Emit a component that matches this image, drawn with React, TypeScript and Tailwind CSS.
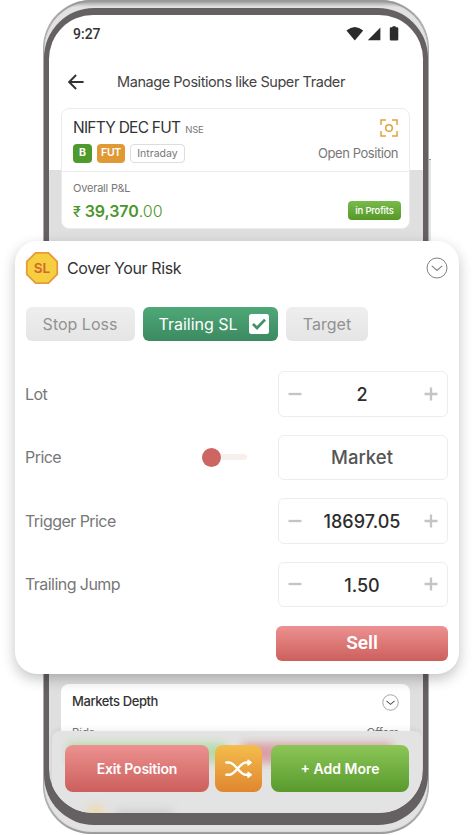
import React from "react";
import { clsx } from "clsx";

type StepperRow = {
  label: string;
  value: string;
  stepper: boolean;
};

const rows: StepperRow[] = [
  { label: "Lot", value: "2", stepper: true },
  { label: "Price", value: "Market", stepper: false },
  { label: "Trigger Price", value: "18697.05", stepper: true },
  { label: "Trailing Jump", value: "1.50", stepper: true },
];

function StatusIcons() {
  return (
    <svg width="54" height="16" viewBox="0 0 54 16" fill="#2b2b2b">
      <path d="M0.4 4.6 Q8.8 -2.6 17.2 4.6 L8.8 14.6 Z" />
      <path d="M21.8 14.2 L34.4 1.6 V14.2 Z" />
      <path d="M45 1.2 h1.5 v-1 h3.2 v1 h1.4 q1.2 0 1.2 1.2 v10.8 q0 1.2 -1.2 1.2 h-6.1 q-1.2 0 -1.2 -1.2 v-10.8 q0 -1.2 1.2 -1.2 Z" />
    </svg>
  );
}

function BackArrow() {
  return (
    <svg width="16" height="16" viewBox="0 0 16 16" fill="none" stroke="#333" strokeWidth="1.9">
      <path d="M15.6 8 H1.4 M8.1 1 L1.2 8 L8.1 15" />
    </svg>
  );
}

function FocusIcon() {
  return (
    <svg width="18" height="18" viewBox="0 0 18 18" fill="none" stroke="#e0a33c" strokeWidth="1.5">
      <path d="M1 6 V1 H6 M12 1 H17 V6 M17 12 V17 H12 M6 17 H1 V12" />
      <circle cx="9" cy="9" r="3.3" />
    </svg>
  );
}

function ChevronCircle({ size, dark }: { size: number; dark?: boolean }) {
  return (
    <svg width={size} height={size} viewBox="0 0 22 22" fill="none" strokeWidth="1">
      <circle cx="11" cy="11" r="10" stroke={dark ? "#888" : "#808080"} />
      <path d="M5.8 8.8 L11 13.4 L16.2 8.8" stroke={dark ? "#555" : "#808080"} strokeWidth={dark ? 1.3 : 1.1} />
    </svg>
  );
}

function SwapIcon() {
  return (
    <svg width="30" height="20" viewBox="0 0 30 20" fill="none" stroke="#fff" strokeWidth="2.5" strokeLinecap="round">
      <path d="M2.4 3.6 H5 C12 3.6 15 15.8 22 15.8 H24" />
      <path d="M2.4 15.8 H5 C12 15.8 15 3.6 22 3.6 H24" />
      <path d="M24 1 L27.4 3.6 L24 6.2 Z M24 13.2 L27.4 15.8 L24 18.4 Z" fill="#fff" strokeWidth="1.2" strokeLinejoin="round" />
    </svg>
  );
}

function PositionCard() {
  return (
    <div className="mr-[13px] ml-3 h-[121px] rounded-lg border border-[#ebebeb] bg-white">
      <div className="flex h-[63px] justify-between border-b border-[#ececec] pr-[11px] pl-[11px]">
        <div>
          <div className="mt-[9px] flex h-5 items-baseline gap-[5px]">
            <span className="text-[15.5px] leading-5 tracking-[-0.75px] text-[#333]">NIFTY DEC FUT</span>
            <span className="text-[9.5px] tracking-[-0.3px] text-[#777]">NSE</span>
          </div>
          <div className="mt-[6px] flex gap-[5px] text-[11px] leading-[18px]">
            <span className="w-[19px] rounded bg-[#4f9a2d] text-center text-[10.5px] font-bold text-white">B</span>
            <span className="w-7 rounded bg-[#e09a35] text-center text-[10.5px] font-semibold tracking-[-0.3px] text-white">
              FUT
            </span>
            <span className="w-[55px] rounded border border-[#ddd] text-center text-[10.5px] leading-[17px] text-[#777]">
              Intraday
            </span>
          </div>
        </div>
        <div className="flex flex-col items-end">
          <div className="mt-[10px]">
            <FocusIcon />
          </div>
          <span className="mt-[6px] text-[13px] leading-5 tracking-[-0.45px] text-[#777]">Open Position</span>
        </div>
      </div>
      <div className="flex justify-between pr-2 pl-[11px]">
        <div>
          <div className="mt-2 text-[11px] leading-4 tracking-[-0.2px] text-[#777]">Overall P&amp;L</div>
          <div className="mt-[5px] text-[16px] leading-5 tracking-[-0.05px] text-[#4c962b]">
            <span className="mr-1 text-[14px] font-medium">₹</span>
            <span className="font-semibold">39,370</span>
            <span className="font-light">.00</span>
          </div>
        </div>
        <span className="mt-[29px] h-[19px] w-[53px] rounded bg-linear-to-b from-[#79bb4a] to-[#559828] text-center text-[9.5px] leading-[19px] font-medium tracking-[-0.2px] text-white">
          in Profits
        </span>
      </div>
    </div>
  );
}

function BottomBar() {
  return (
    <div className="absolute bottom-0 left-[3px] h-[82px] w-[370px] rounded-t-lg bg-[#e3e3e3] shadow-[0_-2px_5px_rgba(0,0,0,0.06)]">
      <div className="absolute top-[12px] left-4 h-5 w-[158px] bg-[#b4dca9] blur-[4px]"></div>
      <div className="absolute top-[12px] left-[190px] h-5 w-[150px] bg-[#d9a0a6] blur-[4px]"></div>
      <div className="absolute bottom-[-5px] left-9 h-3 w-4 bg-[#ecd9ae] blur-[4px]"></div>
      <div className="absolute bottom-[-8px] left-[64px] h-3 w-14 bg-[#d0d0d0] blur-[4px]"></div>
      <div className="relative mt-[14px] ml-[13px] flex h-[47px] text-[14px] font-semibold text-white">
        <button className="w-36 rounded-lg bg-linear-to-b from-[#ec9191] to-[#cc5f5c] tracking-[-0.2px]">
          Exit Position
        </button>
        <button className="ml-[6px] flex w-[47px] items-center justify-center rounded-lg bg-linear-to-b from-[#f4bd4c] to-[#df8630]">
          <SwapIcon />
        </button>
        <button className="ml-[9px] w-[138px] rounded-lg bg-linear-to-b from-[#8cc657] to-[#599a2c]">
          + Add More
        </button>
      </div>
    </div>
  );
}

function Phone() {
  return (
    <div className="relative ml-[43px] h-[835px] w-[386px]">
      {/* side button */}
      <div className="absolute top-[159px] left-[385px] h-[90px] w-[3px] border-t border-[#999] bg-[#e4e4e4]"></div>
      <div className="relative h-[834px] rounded-[48px] border-x border-[#aaa] bg-linear-to-b from-[#909090] via-[#e2e2e2] via-[7px] to-[#e2e2e2] to-[830px] pt-2 pb-[9px] shadow-[inset_0_-2px_1px_#999,inset_0_2px_1px_#999]">
        <div className="h-full rounded-[50px] bg-[#656162] px-[5px] pt-[7px] pb-3">
          <div className="relative h-full overflow-hidden rounded-[44px] bg-linear-to-b from-white from-[155px] to-[#dfdfdf] to-[155px]">
            <div className="flex h-[38px] items-center justify-between pr-[23px] pl-6">
              <span className="font-['Roboto'] text-[14px] font-medium text-[#333]">9:27</span>
              <StatusIcons />
            </div>
            <div className="flex h-[55px] items-center pt-[3px] pl-[19px]">
              <BackArrow />
              <h1 className="ml-[33px] text-[14.5px] tracking-[-0.43px] text-[#444]">
                Manage Positions like Super Trader
              </h1>
            </div>
            <PositionCard />
            <div className="mt-[455px] mr-[13px] ml-3 h-[90px] rounded-lg bg-white pt-2 pr-[11px] pl-[11px]">
              <div className="flex h-5 items-center justify-between">
                <h2 className="text-[13px] font-medium tracking-[-0.4px] text-[#333]">Markets Depth</h2>
                <ChevronCircle size={17} dark />
              </div>
              <div className="mt-[13px] flex justify-between text-[11.5px] leading-4 tracking-[-0.2px] text-[#777]">
                <span>Bids</span>
                <span>Offers</span>
              </div>
            </div>
            <BottomBar />
          </div>
        </div>
      </div>
    </div>
  );
}

function RiskCard() {
  return (
    <div className="absolute top-[241px] left-[15px] h-[433px] w-[444px] rounded-[22px] bg-white pr-[11px] pl-[10px] shadow-[0_5px_14px_rgba(0,0,0,0.24)]">
      <div className="flex h-[54px] items-center">
        <svg width="34" height="34" viewBox="0 0 34 34">
          <path
            d="M10.6 1.8 H23.4 L32.2 10.6 V23.4 L23.4 32.2 H10.6 L1.8 23.4 V10.6 Z"
            fill="#f5cf3f"
            stroke="#e59a3c"
            strokeWidth="1.8"
          />
          <text x="17" y="21.5" textAnchor="middle" fontSize="13.5" fontWeight="600" fill="#d0692f" fontFamily="Inter">
            SL
          </text>
        </svg>
        <h2 className="ml-2 text-[16px] tracking-[-0.4px] text-[#333]">Cover Your Risk</h2>
        <div className="ml-auto">
          <ChevronCircle size={22} />
        </div>
      </div>
      <div className="mt-3 ml-[0.5px] flex h-[34px] gap-[8.5px] text-[16px]">
        <button className="w-[109px] rounded-md bg-linear-to-b from-[#eee] to-[#e5e5e5] text-[#929292]">Stop Loss</button>
        <button className="flex w-[134.5px] items-center rounded-md bg-linear-to-b from-[#4fa878] to-[#3c8a60] pl-[15.5px] text-white">
          Trailing SL
          <svg className="ml-[11px]" width="20" height="20" viewBox="0 0 20 20">
            <rect width="20" height="20" rx="2.5" fill="#fff" />
            <path d="M4 10 L8 14 L16 5.6" fill="none" stroke="#3f9567" strokeWidth="2.8" />
          </svg>
        </button>
        <button className="w-[82px] rounded-md bg-linear-to-b from-[#eee] to-[#e5e5e5] text-[#929292]">Target</button>
      </div>
      <div className="mt-[30px] flex flex-col gap-[18px]">
        {rows.map((row) => (
          <div key={row.label} className="flex h-[45.5px] items-center">
            <span className="text-[16px] tracking-[-0.55px] text-[#777]">{row.label}</span>
            {row.label === "Price" && (
              <div className="ml-auto flex items-center">
                <span className="h-[19px] w-[19px] rounded-full bg-[#cd6563]"></span>
                <span className="h-[6px] w-[26px] rounded-r-full bg-[#f7efec]"></span>
              </div>
            )}
            <div
              className={clsx(
                "flex h-full w-[170px] items-center rounded-md border border-[#ededed] px-[9px]",
                row.label === "Price" ? "ml-[31px]" : "ml-auto"
              )}
            >
              {row.stepper && (
                <svg width="14" height="14" viewBox="0 0 14 14" stroke="#c4c4c4" strokeWidth="2.3">
                  <path d="M0.5 7 H13.5" />
                </svg>
              )}
              <span
                className={clsx(
                  "flex-1 pt-[2px] pr-[2px] text-center font-medium",
                  row.stepper ? "text-[18px] text-[#2d2d2d]" : "text-[18.5px] text-[#555]"
                )}
              >
                {row.value}
              </span>
              {row.stepper && (
                <svg width="14" height="14" viewBox="0 0 14 14" stroke="#c4c4c4" strokeWidth="2.3">
                  <path d="M7 0.5 V13.5 M0.5 7 H13.5" />
                </svg>
              )}
            </div>
          </div>
        ))}
      </div>
      <button className="mt-[19px] ml-auto block h-[35px] w-[172px] rounded-md bg-linear-to-b from-[#ec9191] to-[#cc5f5c] font-['Roboto'] text-[19px] font-semibold text-white">
        Sell
      </button>
    </div>
  );
}

export default function App() {
  return (
    <div className="relative h-[835px] w-[474px] overflow-hidden bg-white font-['Inter',sans-serif]">
      <Phone />
      <RiskCard />
    </div>
  );
}
